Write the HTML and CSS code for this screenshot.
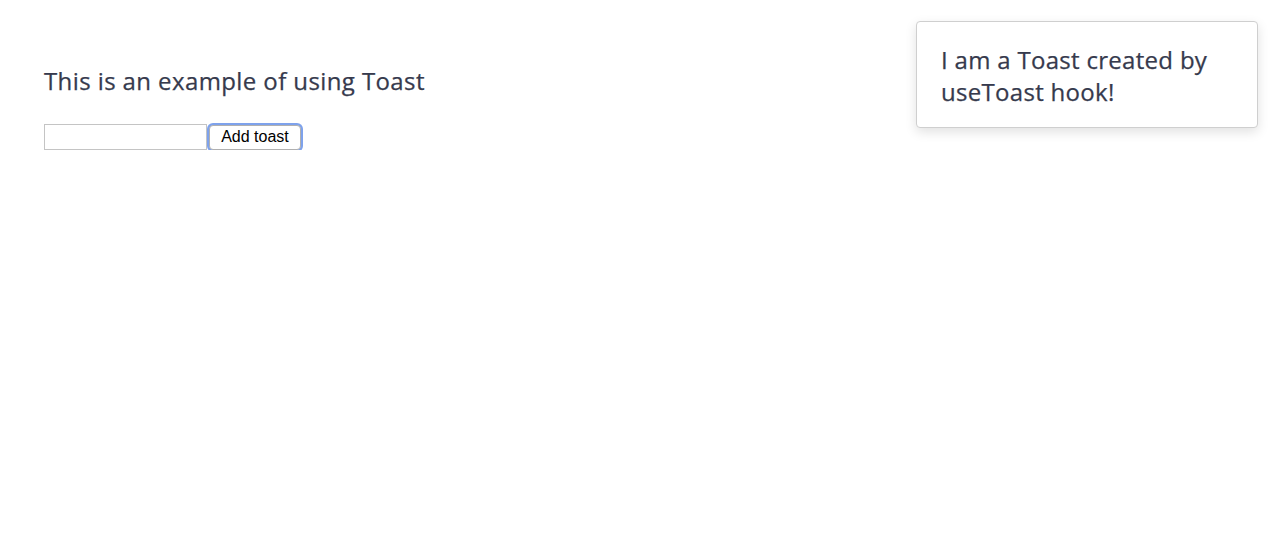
FILE: index.html
```html
<!DOCTYPE html>
<html>
<head>
<meta charset="utf-8">
<link rel="stylesheet" href="styles.css">
</head>
<body>
<main class="page">
  <h2 class="title">This is an example of using Toast</h2>
  <div class="form">
    <input class="field" type="text"><button class="btn">Add toast</button>
  </div>
</main>
<div class="toast">
  <p class="toast-text">I am a Toast created by useToast hook!</p>
</div>
</body>
</html>
```
FILE: styles.css
```css
html, body { margin: 0; padding: 0; background: #fff; }
body { font-family: "Open Sans", "Noto Sans", sans-serif; color: #363a4d; }
.page { padding: 64px 44px 0; }
.title { margin: 0; font-size: 24px; font-weight: 500; line-height: 34px; letter-spacing: 0.4px; -webkit-text-stroke: 0.25px #363a4d; }
.form { margin-top: 26px; display: flex; align-items: center; }
.field {
  width: 163px; height: 26px; box-sizing: border-box; margin: 0;
  border: 1px solid #c4c4c4; padding: 0 4px; font-size: 14px;
}
.btn {
  margin-left: 2px; height: 25px; box-sizing: border-box; width: 92px;
  font-family: "Liberation Sans", Arial, sans-serif; font-size: 16px; color: #000;
  background: #fff; border: 1px solid #b0b0b0; border-radius: 4px;
  box-shadow: 0 0 0 2px #7ea2ec; padding: 0;
}
.toast {
  position: absolute; top: 21px; left: 916px; width: 342px; height: 107px; box-sizing: border-box;
  border: 1px solid #cfcfcf; border-radius: 4px; background: #fff;
  box-shadow: 0 4px 12px rgba(0,0,0,0.12);
  padding: 22px 24px;
}
.toast-text { margin: 0; font-size: 24px; font-weight: 500; line-height: 32px; letter-spacing: 0.3px; -webkit-text-stroke: 0.25px #363a4d; }
```
